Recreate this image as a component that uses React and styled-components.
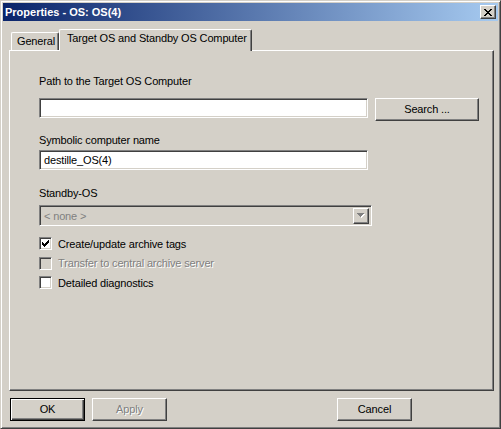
import { createGlobalStyle, styled, css } from 'styled-components'

const GlobalStyle = createGlobalStyle`
  html, body {
    margin: 0;
    padding: 0;
    background: #d4d0c8;
  }
  body {
    font-family: "Liberation Sans", Arial, sans-serif;
    font-size: 11px;
    letter-spacing: -0.15px;
    color: #000;
  }
`

const raised = css`
  border: 1px solid;
  border-color: #fff #404040 #404040 #fff;
  box-shadow: inset -1px -1px #808080;
`

const sunken = css`
  border: 1px solid;
  border-color: #808080 #fff #fff #808080;
  box-shadow: inset 1px 1px #404040, inset -1px -1px #d4d0c8;
`

const disabledText = css`
  color: #808080;
  text-shadow: 1px 1px 0 #fff;
`

const Window = styled.div`
  box-sizing: border-box;
  width: 501px;
  height: 429px;
  border: 1px solid;
  border-color: #d4d0c8 #404040 #404040 #d4d0c8;
  box-shadow: inset 1px 1px #fff, inset -1px -1px #808080;
  padding: 2px;
  background: #d4d0c8;
  display: flex;
  flex-direction: column;
`

const TitleBar = styled.div`
  height: 18px;
  flex: none;
  display: flex;
  align-items: center;
  justify-content: space-between;
  padding: 0 2px 0 2px;
  background: linear-gradient(to right, #0a246a, #a6caf0);
  color: #fff;
  font-weight: bold;
  font-size: 11px;
  letter-spacing: 0;
`

const TitleText = styled.span`
  line-height: 18px;
`

const CloseButton = styled.div`
  box-sizing: border-box;
  width: 16px;
  height: 14px;
  background: #d4d0c8;
  ${raised};
  display: flex;
  align-items: center;
  justify-content: center;
`

const Body = styled.div`
  flex: 1;
  display: flex;
  flex-direction: column;
  padding: 0 4px 0 6px;
`

const TabStrip = styled.div`
  display: flex;
  align-items: flex-end;
  margin-top: 7px;
  height: 22px;
  padding-left: 2px;
`

const Tab = styled.div`
  box-sizing: border-box;
  width: ${p => p.$w}px;
  height: ${p => (p.$active ? 22 : 18)}px;
  margin-bottom: ${p => (p.$active ? -1 : 0)}px;
  position: relative;
  z-index: ${p => (p.$active ? 1 : 0)};
  background: #d4d0c8;
  border-left: 1px solid #fff;
  border-top: 1px solid #fff;
  border-right: 1px solid #404040;
  border-top-left-radius: 2px;
  border-top-right-radius: 2px;
  box-shadow: inset -1px 0 #808080;
  padding-left: ${p => (p.$active ? 7 : 5)}px;
  line-height: ${p => (p.$active ? 16 : 17)}px;
  white-space: nowrap;
  overflow: hidden;
`

const Panel = styled.div`
  box-sizing: border-box;
  height: 341px;
  border: 1px solid;
  border-color: #fff #404040 #404040 #fff;
  box-shadow: inset -1px -1px #808080;
  padding: 24px 0 0 29px;
  display: flex;
  flex-direction: column;
  align-items: flex-start;
`

const Label = styled.div`
  line-height: 13px;
  margin-top: ${p => p.$mt || 0}px;
  white-space: nowrap;
`

const Row = styled.div`
  display: flex;
  align-items: flex-start;
  gap: 7px;
  margin-top: ${p => p.$mt || 0}px;
`

const TextBox = styled.div`
  box-sizing: border-box;
  width: 329px;
  height: 20px;
  background: #fff;
  ${sunken};
  padding: 0 4px;
  line-height: 18px;
  margin-top: ${p => p.$mt || 0}px;
`

const Button = styled.div`
  box-sizing: border-box;
  flex: none;
  width: ${p => p.$w || 75}px;
  height: 23px;
  padding-bottom: 1px;
  background: #d4d0c8;
  display: flex;
  align-items: center;
  justify-content: center;
  ${p =>
    p.$default
      ? css`
          border: 1px solid #000;
          box-shadow: inset 1px 1px #fff, inset -1px -1px #404040, inset -2px -2px #808080;
        `
      : raised};
  ${p => p.$disabled && disabledText};
`

const Select = styled.div`
  box-sizing: border-box;
  width: 333px;
  height: 21px;
  background: #d4d0c8;
  ${sunken};
  margin-top: ${p => p.$mt || 0}px;
  display: flex;
  align-items: center;
  padding: 2px 2px 2px 4px;
`

const SelectText = styled.span`
  flex: 1;
  color: #808080;
`

const DropButton = styled.div`
  box-sizing: border-box;
  width: 16px;
  height: 16px;
  background: #d4d0c8;
  ${raised};
  display: flex;
  align-items: center;
  justify-content: center;
`

const Checks = styled.div`
  margin-top: 8px;
  display: flex;
  flex-direction: column;
`

const CheckRow = styled.div`
  display: flex;
  align-items: center;
  gap: 6px;
  height: ${p => p.$h || 19}px;
  ${p => p.$disabled && disabledText};
`

const Box = styled.div`
  box-sizing: border-box;
  width: 13px;
  height: 13px;
  ${sunken};
  background: ${p => (p.$disabled ? '#d4d0c8' : '#fff')};
  display: flex;
  align-items: center;
  justify-content: center;
  text-shadow: none;
`

const Footer = styled.div`
  display: flex;
  gap: 7px;
  margin-top: 7px;
  padding-left: 1px;
`

const Spacer = styled.div`
  flex: none;
  width: 156px;
`

const CloseIcon = () => (
  <svg width="8" height="7" viewBox="0 0 8 7" shapeRendering="crispEdges">
    <path
      d="M0 0h2v1h-2zM6 0h2v1h-2zM1 1h2v1h-2zM5 1h2v1h-2zM2 2h4v1h-4zM3 3h2v1h-2zM2 4h4v1h-4zM1 5h2v1h-2zM5 5h2v1h-2zM0 6h2v1h-2zM6 6h2v1h-2z"
      fill="#000"
    />
  </svg>
)

const CheckMark = () => (
  <svg width="7" height="7" viewBox="0 0 7 7" shapeRendering="crispEdges">
    <path d="M6 0h1v3h-1zM5 1h1v3h-1zM4 2h1v3h-1zM3 3h1v3h-1zM2 4h1v3h-1zM1 3h1v3h-1zM0 2h1v3h-1z" fill="#000" />
  </svg>
)

const Arrow = () => (
  <svg width="8" height="5" viewBox="0 0 8 5" shapeRendering="crispEdges">
    <path d="M1 1h7v1h-7zM2 2h5v1h-5zM3 3h3v1h-3zM4 4h1v1h-1z" fill="#fff" />
    <path d="M0 0h7v1h-7zM1 1h5v1h-5zM2 2h3v1h-3zM3 3h1v1h-1z" fill="#808080" />
  </svg>
)

const Check = ({ checked, disabled, children, h }) => (
  <CheckRow $disabled={disabled} $h={h}>
    <Box $disabled={disabled}>{checked && <CheckMark />}</Box>
    <span>{children}</span>
  </CheckRow>
)

export default function App() {
  return (
    <>
      <GlobalStyle />
      <Window>
        <TitleBar>
          <TitleText>Properties - OS: OS(4)</TitleText>
          <CloseButton>
            <CloseIcon />
          </CloseButton>
        </TitleBar>
        <Body>
          <TabStrip>
            <Tab $w={48}>General</Tab>
            <Tab $w={193} $active>
              Target OS and Standby OS Computer
            </Tab>
          </TabStrip>
          <Panel>
            <Label>Path to the Target OS Computer</Label>
            <Row $mt={10}>
              <TextBox />
              <Button $w={104}>Search ...</Button>
            </Row>
            <Label $mt={13}>Symbolic computer name</Label>
            <TextBox $mt={3}>destille_OS(4)</TextBox>
            <Label $mt={17}>Standby-OS</Label>
            <Select $mt={5}>
              <SelectText>&lt; none &gt;</SelectText>
              <DropButton>
                <Arrow />
              </DropButton>
            </Select>
            <Checks>
              <Check checked>Create/update archive tags</Check>
              <Check disabled h={20}>
                Transfer to central archive server
              </Check>
              <Check>Detailed diagnostics</Check>
            </Checks>
          </Panel>
          <Footer>
            <Button $default>OK</Button>
            <Button $disabled>Apply</Button>
            <Spacer />
            <Button>Cancel</Button>
          </Footer>
        </Body>
      </Window>
    </>
  )
}
